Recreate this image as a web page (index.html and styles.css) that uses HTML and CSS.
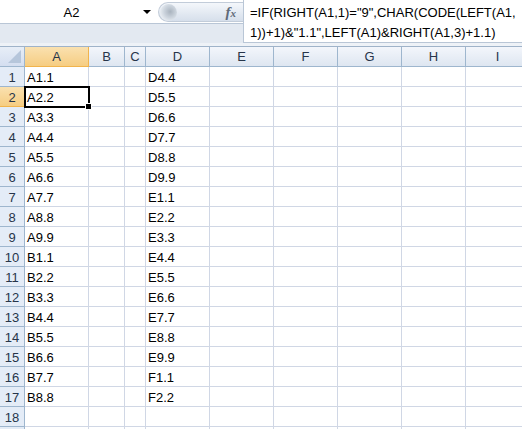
FILE: index.html
```html
<!DOCTYPE html>
<html>
<head>
<meta charset="utf-8">
<link rel="stylesheet" href="styles.css">
</head>
<body>
<div class="app">
  <div class="fbar">
    <div class="fleft">
      <div class="ftop">
        <div class="namebox"><span class="nbtext">A2</span><span class="nbarrow"></span></div>
        <div class="fxbtn"><span class="knob"></span><span class="fx">f<span class="x">x</span></span></div>
      </div>
      <div class="fband"></div>
    </div>
    <div class="formula">=IF(RIGHT(A1,1)="9",CHAR(CODE(LEFT(A1,<br>1))+1)&amp;"1.1",LEFT(A1)&amp;RIGHT(A1,3)+1.1)</div>
  </div>
  <div class="sep"></div>
  <div class="sheetwrap">
    <div class="sheet" id="sheet">
      <div class="corner"><span class="tri"></span></div>
      <div class="ch sel">A</div>
      <div class="ch">B</div>
      <div class="ch">C</div>
      <div class="ch">D</div>
      <div class="ch">E</div>
      <div class="ch">F</div>
      <div class="ch">G</div>
      <div class="ch">H</div>
      <div class="ch">I</div>
    </div>
    <div class="selbox"><span class="handle"></span></div>
  </div>
</div>
<script src="app.js"></script>
</body>
</html>
```

FILE: app.js
```js
const a = ["A1.1","A2.2","A3.3","A4.4","A5.5","A6.6","A7.7","A8.8","A9.9","B1.1","B2.2","B3.3","B4.4","B5.5","B6.6","B7.7","B8.8"];
const d = ["D4.4","D5.5","D6.6","D7.7","D8.8","D9.9","E1.1","E2.2","E3.3","E4.4","E5.5","E6.6","E7.7","E8.8","E9.9","F1.1","F2.2"];
const sheet = document.getElementById("sheet");
for (let r = 1; r <= 19; r++) {
  const rh = document.createElement("div");
  rh.className = "rh" + (r === 2 ? " sel" : "");
  if (r <= 18) rh.textContent = r;
  sheet.appendChild(rh);
  for (let c = 0; c < 9; c++) {
    const cell = document.createElement("div");
    cell.className = "cell";
    if (c === 0 && a[r - 1]) cell.textContent = a[r - 1];
    if (c === 3 && d[r - 1]) cell.textContent = d[r - 1];
    sheet.appendChild(cell);
  }
}
```

FILE: styles.css
```css
html, body {
  margin: 0;
  padding: 0;
  background: #ffffff;
  overflow: hidden;
}
.app {
  width: 522px;
  height: 429px;
  overflow: hidden;
  font-family: "Liberation Sans", Arial, sans-serif;
  font-size: 13px;
  color: #000;
}
.fbar {
  display: flex;
  height: 43px;
  background: #dfe6ef;
}
.fleft {
  width: 243px;
  display: flex;
  flex-direction: column;
}
.ftop {
  display: flex;
  height: 23px;
  border-bottom: 1px solid #b9c6d6;
  background: #ffffff;
}
.namebox {
  width: 157px;
  display: flex;
  align-items: center;
  background: #fff;
}
.nbtext {
  flex: 1;
  text-align: center;
  padding-top: 2px;
}
.nbarrow {
  width: 0;
  height: 0;
  border-left: 4px solid transparent;
  border-right: 4px solid transparent;
  border-top: 4px solid #000;
  margin-right: 6px;
  margin-top: 1px;
}
.fxbtn {
  flex: 1;
  margin: 2px 0 0 1px;
  height: 20px;
  border-radius: 11px 0 0 11px;
  background: linear-gradient(#f4f7fb, #d6dfeb);
  border: 1px solid #c2ccd9;
  border-right: none;
  display: flex;
  align-items: center;
  box-sizing: border-box;
}
.knob {
  width: 17px;
  height: 17px;
  border-radius: 50%;
  margin-left: 1px;
  background: radial-gradient(circle at 60% 45%, #a9b3be 0%, #cdd5de 45%, #eef2f6 80%);
}
.fx {
  margin-left: auto;
  margin-right: 7px;
  font-family: "Liberation Serif", "Times New Roman", serif;
  font-style: italic;
  font-weight: bold;
  font-size: 15px;
  color: #606a78;
}
.fx .x { font-size: 11px; }
.fband {
  flex: 1;
  background: #e3e9f1;
}
.formula {
  flex: 1;
  background: #fff;
  border-left: 1px solid #b9c6d6;
  border-bottom: 1px solid #b9c6d6;
  padding: 3px 0 0 6px;
  line-height: 20px;
  white-space: nowrap;
  overflow: hidden;
}
.sep {
  height: 3px;
  background: #eef2f7;
  border-bottom: 1px solid #9fb3c9;
}
.sheetwrap {
  position: relative;
}
.sheet {
  display: grid;
  grid-template-columns: 25px 64px 36px 21px 64px 64px 64px 64px 64px 64px;
  grid-auto-rows: 20px;
}
.corner {
  background: linear-gradient(#e7eef7, #d4def0);
  border-right: 1px solid #9eb6ce;
  border-bottom: 1px solid #9eb6ce;
  position: relative;
}
.tri {
  position: absolute;
  right: 3px;
  bottom: 3px;
  width: 0;
  height: 0;
  border-left: 13px solid transparent;
  border-bottom: 13px solid #b6c6db;
}
.ch {
  background: linear-gradient(#f3f6fb, #dee6f1);
  border-right: 1px solid #9eb6ce;
  border-bottom: 1px solid #9eb6ce;
  text-align: center;
  line-height: 20px;
  color: #27354a;
}
.ch.sel, .rh.sel {
  background: linear-gradient(#fae1b0, #f6cd82);
  border-color: #f1b44d;
}
.rh {
  background: #e4ecf7;
  border-right: 1px solid #9eb6ce;
  border-bottom: 1px solid #9eb6ce;
  text-align: center;
  line-height: 20px;
  padding-top: 1px;
  box-sizing: border-box;
  overflow: hidden;
  color: #27354a;
}
.cell {
  border-right: 1px solid #d0d7e5;
  border-bottom: 1px solid #d0d7e5;
  padding: 1px 0 0 2px;
  box-sizing: border-box;
  line-height: 20px;
  white-space: nowrap;
  overflow: hidden;
}
.selbox {
  position: absolute;
  left: 24px;
  top: 39px;
  width: 66px;
  height: 22px;
  border: 2px solid #000;
  box-sizing: border-box;
}
.handle {
  position: absolute;
  right: -4px;
  bottom: -4px;
  width: 5px;
  height: 5px;
  background: #000;
  border: 1px solid #fff;
}
```
